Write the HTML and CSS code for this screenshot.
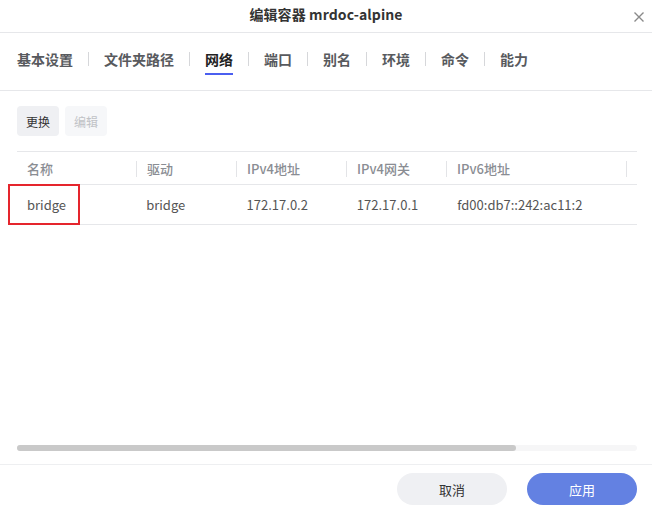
FILE: index.html
```html
<!DOCTYPE html>
<html lang="zh">
<head>
<meta charset="utf-8">
<title>编辑容器 mrdoc-alpine</title>
<link rel="stylesheet" href="styles.css">
</head>
<body>
<div class="dialog">
  <header class="head">
    <div class="title">编辑容器 mrdoc-alpine</div>
    <button class="close" aria-label="关闭">
      <svg width="10" height="10" viewBox="0 0 10 10"><path d="M0.5 0.5 L9.5 9.5 M9.5 0.5 L0.5 9.5" stroke="#8a8a8a" stroke-width="1.4" fill="none"/></svg>
    </button>
  </header>
  <nav class="tabs">
    <span class="tab">基本设置</span><span class="sep"></span>
    <span class="tab">文件夹路径</span><span class="sep"></span>
    <span class="tab active">网络</span><span class="sep"></span>
    <span class="tab">端口</span><span class="sep"></span>
    <span class="tab">别名</span><span class="sep"></span>
    <span class="tab">环境</span><span class="sep"></span>
    <span class="tab">命令</span><span class="sep"></span>
    <span class="tab">能力</span>
  </nav>
  <main class="main">
    <div class="toolbar">
      <button class="btn">更换</button>
      <button class="btn disabled">编辑</button>
    </div>
    <div class="tablewrap">
      <div class="row hdr">
        <div class="cell c1">名称</div>
        <div class="cell c2">驱动</div>
        <div class="cell c3">IPv4地址</div>
        <div class="cell c4">IPv4网关</div>
        <div class="cell c5">IPv6地址</div>
        <div class="cell c6"></div>
      </div>
      <div class="row data">
        <div class="cell c1">bridge<span class="mark"></span></div>
        <div class="cell c2">bridge</div>
        <div class="cell c3">172.17.0.2</div>
        <div class="cell c4">172.17.0.1</div>
        <div class="cell c5">fd00:db7::242:ac11:2</div>
        <div class="cell c6"></div>
      </div>
    </div>
    <div class="scroll"><div class="thumb"></div></div>
  </main>
  <footer class="foot">
    <button class="pill cancel">取消</button>
    <button class="pill apply">应用</button>
  </footer>
</div>
</body>
</html>
```
FILE: styles.css
```css
* { box-sizing: border-box; }
html, body { margin: 0; padding: 0; background: #fff; }
body {
  font-family: "Noto Sans CJK SC", "Noto Sans", sans-serif;
  color: #333;
  width: 652px;
  height: 507px;
  overflow: hidden;
}
button { font-family: inherit; border: none; cursor: pointer; }
.dialog { display: flex; flex-direction: column; height: 507px; }

.head {
  position: relative;
  height: 33px;
  border-bottom: 1px solid #e6e7ea;
  display: flex;
  align-items: center;
  justify-content: center;
  padding-bottom: 5px;
}
.title { font-size: 14px; font-weight: 700; color: #333; letter-spacing: 0.1px; }
.close {
  position: absolute;
  right: 8px;
  top: 12px;
  width: 10px;
  height: 10px;
  padding: 0;
  background: none;
  display: flex;
}

.tabs {
  height: 58px;
  border-bottom: 1px solid #e6e7ea;
  display: flex;
  align-items: center;
  padding: 0 0 5px 17px;
}
.tab {
  position: relative;
  font-size: 14px;
  font-weight: 700;
  color: #585a5e;
  line-height: 20px;
}
.tab.active { color: #222; }
.tab.active::after {
  content: "";
  position: absolute;
  left: 0;
  right: 0;
  bottom: -6px;
  height: 2px;
  background: #4b5ff0;
}
.sep { width: 1px; height: 14px; background: #d6d7da; margin: 0 15px; }

.main {
  flex: 1;
  display: flex;
  flex-direction: column;
  padding: 15px 15px 0 17px;
}
.toolbar { display: flex; gap: 6px; }
.btn {
  width: 42px;
  height: 30px;
  border-radius: 4px;
  background: #eff0f3;
  font-size: 12px;
  color: #333;
  padding: 0;
}
.btn.disabled { background: #f6f7f9; color: #c0c2c6; }

.tablewrap { flex: 1; margin-top: 15px; }
.row { display: flex; border-top: 1px solid #e6e7ea; }
.row.hdr { height: 33px; align-items: center; padding-top: 2px; }
.row.data { height: 41px; align-items: center; border-bottom: 1px solid #e6e7ea; }
.cell { font-size: 13px; padding-left: 10px; position: relative; }
.hdr .cell { color: #8a8d93; font-weight: 500; height: 16px; line-height: 16px; }
.hdr .cell + .cell { border-left: 1px solid #e3e4e7; }
.data .cell { color: #555; line-height: 20px; }
.data .cell + .cell { margin-left: 1px; }
.c1 { width: 119px; }
.c2 { width: 100px; }
.c3 { width: 110px; }
.c4 { width: 100px; }
.c5 { width: 180px; }
.c6 { width: 10px; }
.mark {
  position: absolute;
  left: -9px;
  top: -11px;
  width: 72px;
  height: 41px;
  border: 2px solid #e5252d;
}

.scroll {
  height: 6px;
  border-radius: 3px;
  background: #f6f6f7;
  margin-bottom: 13px;
  width: 620px;
}
.thumb { width: 499px; height: 6px; border-radius: 3px; background: #c9c9c9; }

.foot {
  height: 43px;
  border-top: 1px solid #eeeff1;
  display: flex;
  justify-content: flex-end;
  gap: 20px;
  padding: 8px 15px 0 0;
}
.pill {
  width: 110px;
  height: 32px;
  border-radius: 16px;
  font-size: 13px;
}
.cancel { background: #eff0f3; color: #333; }
.apply { background: #6381e2; color: #fff; }
```
